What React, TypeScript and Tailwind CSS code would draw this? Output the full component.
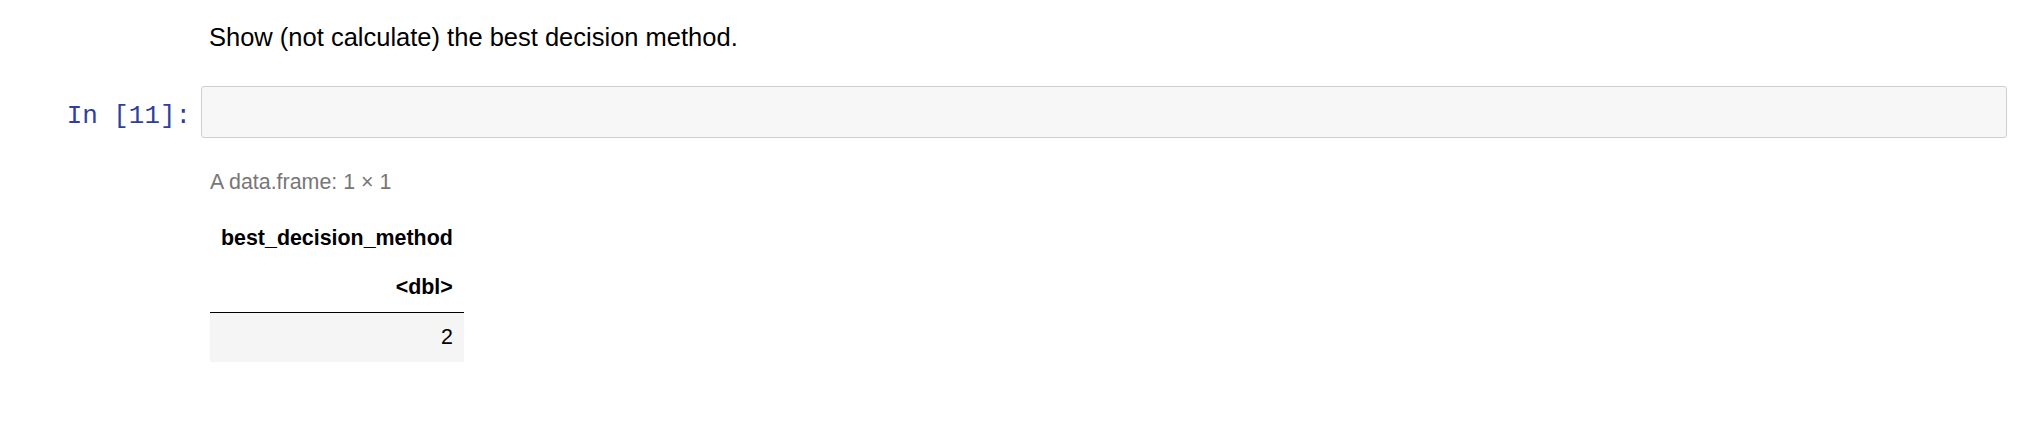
import React from "react";

export default function App() {
  return (
    <div
      className="relative w-[2038px] h-[422px] bg-white text-black"
      style={{ fontFamily: '"Liberation Sans", Arial, Helvetica, sans-serif' }}
    >
      {/* Markdown cell */}
      <div className="pl-[209px] pt-[22px] h-[86px]">
        <p className="text-[25.5px] leading-[30px] text-black">
          Show (not calculate) the best decision method.
        </p>
      </div>

      {/* Code cell */}
      <div className="flex pr-[31px]">
        <div className="w-[201px] shrink-0 pr-[10px] pt-[15px] text-right">
          <span
            className="text-[25.9px] leading-[30px] text-[#303F9F]"
            style={{ fontFamily: '"Liberation Mono", "Courier New", monospace' }}
          >
            In&nbsp;[11]:
          </span>
        </div>
        <div className="flex-1 h-[52px] rounded-[3px] border border-[#cfcfcf] bg-[#f7f7f7]" />
      </div>

      {/* Output */}
      <div className="pl-[210px] pt-[31px]">
        <div className="text-[21.4px] leading-[26px] text-[#777777]">
          A data.frame: 1 × 1
        </div>
        <table className="mt-[19px] border-collapse text-[21.4px] leading-[26px]">
          <thead>
            <tr className="h-[48px]">
              <th className="px-[11px] text-right font-bold">best_decision_method</th>
            </tr>
            <tr className="h-[50px] border-b border-black">
              <th className="px-[11px] text-right font-bold">&lt;dbl&gt;</th>
            </tr>
          </thead>
          <tbody>
            <tr className="h-[50px] bg-[#f5f5f5]">
              <td className="px-[11px] text-right">2</td>
            </tr>
          </tbody>
        </table>
      </div>
    </div>
  );
}
